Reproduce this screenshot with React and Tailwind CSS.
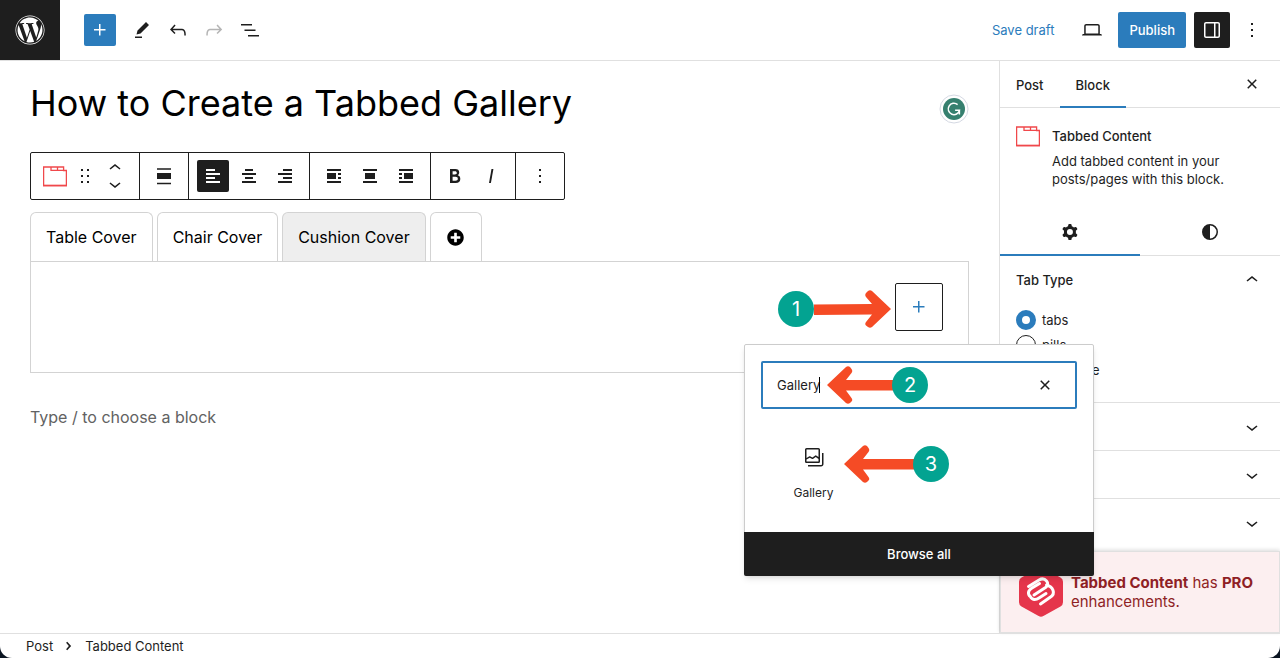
import React, { useState } from 'react';
import { FaWordpress, FaPlusCircle } from 'react-icons/fa';

const icons = {
  plus: 'M11 12.5V17.5H12.5V12.5H17.5V11H12.5V6H11V11H6V12.5H11Z',
  edit: 'm19 7-3-3-8.5 8.5-1 4 4-1L19 7Zm-7 11.5H5V20h7v-1.5Z',
  undo: 'M18.3 11.7c-.6-.6-1.4-.9-2.3-.9H6.7l2.9-3.3-1.1-1-4.5 5L8.5 16l1-1-2.7-2.7H16c.5 0 .9.2 1.3.5 1 1 1 3.4 1 4.5v.3h1.5v-.2c0-1.5 0-4.3-1.5-5.7z',
  redo: 'M15.6 6.5l-1.1 1 2.9 3.3H8c-.9 0-1.7.3-2.3.9-1.4 1.5-1.4 4.2-1.4 5.6v.2h1.5v-.3c0-1.1 0-3.5 1-4.5.3-.3.7-.5 1.3-.5h9.2L14.5 15l1.1 1.1 4.6-4.6-4.6-5z',
  listView: 'M3 6h11v1.5H3V6Zm3.5 5.5h11V13h-11v-1.5ZM21 17H10v1.5h11V17Z',
  desktop: 'M20.5 16h-.7V8c0-1.1-.9-2-2-2H6.2c-1.1 0-2 .9-2 2v8h-.7c-.8 0-1.5.7-1.5 1.5h20c0-.8-.7-1.5-1.5-1.5zM5.7 8c0-.3.2-.5.5-.5h11.6c.3 0 .5.2.5.5v7.6H5.7V8z',
  drawer: 'M18 4H6c-1.1 0-2 .9-2 2v12c0 1.1.9 2 2 2h12c1.1 0 2-.9 2-2V6c0-1.1-.9-2-2-2zm-4 14.5H6c-.3 0-.5-.2-.5-.5V6c0-.3.2-.5.5-.5h8v13zm4.5-.5c0 .3-.2.5-.5.5h-2.5v-13H18c.3 0 .5.2.5.5v12z',
  more: 'M13 19h-2v-2h2v2zm0-6h-2v-2h2v2zm0-6h-2V5h2v2z',
  close: 'M12 13.06l3.712 3.713 1.061-1.06L13.061 12l3.712-3.712-1.06-1.06L12 10.938 8.288 7.227l-1.061 1.06L10.939 12l-3.712 3.712 1.06 1.061L12 13.061z',
  drag: 'M8 7h2V5H8v2zm0 6h2v-2H8v2zm0 6h2v-2H8v2zm6-14v2h2V5h-2zm0 8h2v-2h-2v2zm0 6h2v-2h-2v2z',
  up: 'M6.5 12.4L12 8l5.5 4.4-.9 1.2L12 10l-4.5 3.6-1-1.2z',
  down: 'M17.5 11.6L12 16l-5.5-4.4.9-1.2L12 14l4.5-3.6 1 1.2z',
  right: 'M9.4 5.500L7.600 7.200l4.200 4.800-4.200 4.800 1.800 1.700 5.800-6.500z',
  bold: 'M14.7 11.3c1-.6 1.5-1.6 1.5-3 0-2.3-1.3-3.4-4-3.4H7v14h5.8c1.4 0 2.5-.3 3.3-1 .8-.7 1.2-1.7 1.2-2.9.1-1.9-.8-3.1-2.6-3.7zm-5.1-4h2.3c.6 0 1.1.1 1.4.4.3.3.5.7.5 1.2s-.2 1-.5 1.2c-.3.3-.8.4-1.4.4H9.6V7.3zm4.6 9c-.4.3-1 .4-1.7.4H9.6v-3.9h2.9c.7 0 1.3.2 1.7.5.4.3.6.8.6 1.5s-.2 1.2-.6 1.5z',
  italic: 'M12.5 5L10 19h1.9l2.5-14z',
  cog: 'M10.289 4.836A1 1 0 0111.275 4h1.306a1 1 0 01.987.836l.244 1.466c.787.26 1.503.679 2.108 1.218l1.393-.522a1 1 0 011.216.437l.653 1.13a1 1 0 01-.23 1.273l-1.148.944a6.025 6.025 0 010 2.435l1.149.946a1 1 0 01.23 1.272l-.653 1.13a1 1 0 01-1.216.437l-1.394-.522c-.605.54-1.32.958-2.108 1.218l-.244 1.466a1 1 0 01-.987.836h-1.306a1 1 0 01-.986-.836l-.244-1.466a5.995 5.995 0 01-2.108-1.218l-1.394.522a1 1 0 01-1.217-.436l-.653-1.131a1 1 0 01.23-1.272l1.149-.946a6.026 6.026 0 010-2.435l-1.148-.944a1 1 0 01-.23-1.272l.653-1.131a1 1 0 011.217-.437l1.393.522a5.994 5.994 0 012.108-1.218l.244-1.466zM14.929 12a3 3 0 11-6 0 3 3 0 016 0z',
  styles: 'M20 12a8 8 0 1 1-16 0 8 8 0 0 1 16 0Zm-1.5 0a6.5 6.5 0 0 1-6.5 6.5v-13a6.5 6.5 0 0 1 6.5 6.5Z',
  gallery: 'M16.375 4.5H4.625a.125.125 0 0 0-.125.125v8.254l2.859-1.54a.75.75 0 0 1 .68-.016l2.384 1.142 2.89-2.074a.75.75 0 0 1 .874 0l2.313 1.66V4.625a.125.125 0 0 0-.125-.125Zm.125 9.398-2.75-1.975-2.813 2.02a.75.75 0 0 1-.76.067l-2.444-1.17L4.5 14.583v1.792c0 .069.056.125.125.125h11.75a.125.125 0 0 0 .125-.125v-2.477ZM4.625 3C3.728 3 3 3.728 3 4.625v11.75C3 17.273 3.728 18 4.625 18h11.75c.898 0 1.625-.727 1.625-1.625V4.625C18 3.728 17.273 3 16.375 3H4.625ZM20 8v11c0 .69-.31 1-.999 1H6v1.5h13.001c1.52 0 2.499-.982 2.499-2.5V8H20Z',
};

// 20px grid icons
const smallIcons = {
  textLeft: 'M12 5V3H3v2h9zm5 4V7H3v2h14zm-5 4v-2H3v2h9zm5 4v-2H3v2h14z',
  textCenter: 'M14 5V3H6v2h8zm3 4V7H3v2h14zm-3 4v-2H6v2h8zm3 4v-2H3v2h14z',
  textRight: 'M17 5V3H8v2h9zm0 4V7H3v2h14zm0 4v-2H8v2h9zm0 4v-2H3v2h14z',
  blockLeft: 'M3 5h14V3H3v2zm9 8V7H3v6h9zm2-4h3V7h-3v2zm0 4h3v-2h-3v2zM3 17h14v-2H3v2z',
  blockCenter: 'M3 5h14V3H3v2zm12 8V7H5v6h10zM3 17h14v-2H3v2z',
  blockRight: 'M3 5h14V3H3v2zm0 4h3V7H3v2zm14 4V7H8v6h9zM3 13h3v-2H3v2zm0 4h14v-2H3v2z',
};

const Icon = ({ name, className = 'size-6' }) => (
  <svg viewBox="0 0 24 24" className={className} fill="currentColor" fillRule="evenodd" aria-hidden="true">
    <path d={icons[name]} />
  </svg>
);

const SmallIcon = ({ name }) => (
  <svg viewBox="0 0 20 20" className="size-5" fill="currentColor" aria-hidden="true">
    <path d={smallIcons[name]} />
  </svg>
);

const IconButton = ({ label, children, className = 'w-9' }) => (
  <button type="button" aria-label={label} className={`flex h-9 items-center justify-center ${className}`}>
    {children}
  </button>
);

const TabbedIcon = () => (
  <svg viewBox="0 0 24 21" className="h-[21px] w-6 shrink-0" fill="none" stroke="#f0484b" aria-hidden="true">
    <path d="M.6 19.5V1h20v3.5h2.8v15H.6Z" strokeWidth="1.3" />
    <path d="M8 1v3.4h13M14.5 1v3.4" strokeWidth="1.3" />
    <path d="M0 19.6h24" strokeWidth="1.4" />
  </svg>
);

const GrammarlyBadge = () => (
  <svg viewBox="0 0 30 30" className="mt-3 size-[30px] shrink-0" aria-hidden="true">
    <circle cx="15" cy="15" r="14" fill="#fff" stroke="#d5d9e3" />
    <circle cx="15" cy="15" r="11" fill="#36806f" />
    <path d="M18.6 10.6a5.7 5.7 0 1 0 1.9 5.6h-4.4M20.4 20.4v-4.2" fill="none" stroke="#fff" strokeWidth="1.5" />
  </svg>
);

const HexLogo = () => (
  <svg viewBox="0 0 44 50" className="h-[50px] w-11 shrink-0" aria-hidden="true">
    <path d="M19.6 1 2.5 10.6Q0 12 0 14.8V35.2Q0 38 2.5 39.4L19.6 49Q22 50.3 24.4 49L41.5 39.4Q44 38 44 35.2V14.8Q44 12 41.5 10.6L24.4 1Q22-.3 19.6 1Z" fill="#e5354b" />
    <path
      d="M9.5 19.5 20 13C26 9.5 32 16.5 26.500 20.5L15 28M10.5 29C8 25 10.5 22.5 13 21L20.5 16.5M11 29C13 33.5 17 33 20 31L27 26.5M27.5 18C34 19.5 37 26.5 31.5 30L21.5 37"
      fill="none"
      stroke="#fff"
      strokeWidth="3"
      strokeLinecap="round"
      strokeLinejoin="round"
    />
  </svg>
);

const ArrowRight = () => (
  <svg viewBox="1 0 77 38" className="h-[38px] w-[77px]" fill="#f54b25" aria-hidden="true">
    <path d="M78 19 59 1Q57-.5 55 1L53 3Q51.5 5 53 7L59 14 0 14.5V25L59 24.5 53 32Q51.5 34 53 35.5L55 37Q57 38.5 59 37Z" />
  </svg>
);

const ArrowLeft = () => (
  <svg viewBox="0 0 70 38" className="h-[38px] w-[70px]" fill="#f54b25" aria-hidden="true">
    <path d="M0 19 19 1Q21-.5 23 1L24.5 3Q26 5 24.5 7L19 14H70V24.5H19L24.5 32Q26 34 24.5 35.5L23 37Q21 38.5 19 37Z" />
  </svg>
);

const Step = ({ number, className = '' }) => (
  <span className={`flex size-9 items-center justify-center rounded-full bg-[#03a391] text-xl text-white ${className}`}>
    {number}
  </span>
);

const Header = () => (
  <header className="flex h-[61px] shrink-0 items-center border-b border-[#e0e0e0]">
    <a href="#posts" aria-label="View posts" className="flex size-15 items-center justify-center self-start bg-[#1e1e1e] text-white">
      <FaWordpress className="size-[30px]" />
    </a>
    <div className="ml-6 flex items-center">
      <button type="button" aria-label="Add block" className="mr-2 flex size-8 items-center justify-center rounded-xs bg-[#2b7cbc] text-white">
        <Icon name="plus" />
      </button>
      <IconButton label="Tools"><Icon name="edit" /></IconButton>
      <IconButton label="Undo"><Icon name="undo" /></IconButton>
      <IconButton label="Redo" className="w-9 text-[#b5b5b5]"><Icon name="redo" /></IconButton>
      <IconButton label="List view"><Icon name="listView" /></IconButton>
    </div>
    <div className="ml-auto flex items-center pr-2.5">
      <button type="button" className="mr-5 text-[#2b7cbc]">Save draft</button>
      <IconButton label="Preview"><Icon name="desktop" /></IconButton>
      <button type="button" className="ml-2 h-9 rounded-xs bg-[#2b7cbc] px-[11px] font-medium text-white">Publish</button>
      <IconButton label="Settings" className="mx-2 w-9 rounded-xs bg-[#1e1e1e] text-white"><Icon name="drawer" /></IconButton>
      <IconButton label="Options" className="-ml-1 w-9"><Icon name="more" /></IconButton>
    </div>
  </header>
);

const BlockToolbar = () => (
  <div role="toolbar" className="flex h-12 w-max divide-x divide-[#1e1e1e] rounded-xs border border-[#1e1e1e]">
    <div className="flex w-[109px] items-center pl-3">
      <button type="button" aria-label="Tabbed Content"><TabbedIcon /></button>
      <button type="button" aria-label="Drag" className="ml-1.5"><Icon name="drag" /></button>
      <div className="ml-1.5 flex flex-col">
        <button type="button" aria-label="Move up" className="flex h-4 items-center"><Icon name="up" className="size-6" /></button>
        <button type="button" aria-label="Move down" className="flex h-4 items-center"><Icon name="down" className="size-6" /></button>
      </div>
    </div>
    <div className="flex w-[49px] items-center justify-center">
      <IconButton label="Align">
        <svg viewBox="0 0 20 20" className="size-5" aria-hidden="true">
          <path d="M3 3h14M3 17.5h14" stroke="#1e1e1e" strokeWidth="1.5" />
          <path d="M3 7h14v6H3z" fill="#1e1e1e" />
        </svg>
      </IconButton>
    </div>
    <div className="flex w-[121px] items-center justify-center gap-1">
      <IconButton label="Align text left" className="w-8 max-h-8 rounded-xs bg-[#1e1e1e] text-white"><SmallIcon name="textLeft" /></IconButton>
      <IconButton label="Align text center" className="w-8"><SmallIcon name="textCenter" /></IconButton>
      <IconButton label="Align text right" className="w-8"><SmallIcon name="textRight" /></IconButton>
    </div>
    <div className="flex w-[121px] items-center justify-center gap-1">
      <IconButton label="Align left" className="w-8"><SmallIcon name="blockLeft" /></IconButton>
      <IconButton label="Align center" className="w-8"><SmallIcon name="blockCenter" /></IconButton>
      <IconButton label="Align right" className="w-8"><SmallIcon name="blockRight" /></IconButton>
    </div>
    <div className="flex w-[85px] items-center justify-center">
      <IconButton label="Bold"><Icon name="bold" /></IconButton>
      <IconButton label="Italic"><Icon name="italic" /></IconButton>
    </div>
    <div className="flex w-12 items-center justify-center">
      <IconButton label="Options"><Icon name="more" /></IconButton>
    </div>
  </div>
);

const InserterPopover = () => {
  const [query, setQuery] = useState('Gallery');

  return (
    <div className="absolute left-1/2 top-full z-20 mt-[13px] w-[350px] -translate-x-1/2 rounded-xs border border-[#ccc] bg-white shadow-md">
      <div className="relative mx-4 mt-4">
        <input
          type="text"
          aria-label="Search"
          value={query}
          onChange={(e) => setQuery(e.target.value)}
          className="h-12 w-full rounded-xs border-2 border-[#2b7cbc] px-3.5 outline-none"
        />
        <span className="absolute left-[58px] top-4 h-4 w-px bg-black" />
        <button type="button" aria-label="Reset search" className="absolute right-5 top-3">
          <Icon name="close" />
        </button>
        <div className="absolute left-[66px] top-[5px] flex items-center">
          <ArrowLeft />
          <Step number="2" className="-ml-[5px]" />
        </div>
      </div>
      <div className="relative px-4 pb-[31px] pt-6">
        <button type="button" className="flex w-[105px] flex-col items-center gap-4 pt-3 text-xs">
          <Icon name="gallery" />
          Gallery
        </button>
        <div className="absolute left-[99px] top-9 flex items-center">
          <ArrowLeft />
          <Step number="3" className="-ml-px" />
        </div>
      </div>
      <button type="button" className="-mx-px -mb-px block h-11 w-[350px] rounded-b-xs bg-[#1e1e1e] font-medium text-white">
        Browse all
      </button>
    </div>
  );
};

const tabs = ['Table Cover', 'Chair Cover', 'Cushion Cover'];

const Editor = () => (
  <main className="min-w-0 flex-1 px-[30px] pt-5">
    <div className="flex items-center justify-between">
      <h1 className="text-4xl leading-11 text-black">How to Create a Tabbed Gallery</h1>
      <GrammarlyBadge />
    </div>
    <div className="mt-[27px]">
      <BlockToolbar />
    </div>
    <div role="tablist" className="mt-3 flex gap-1 text-base text-black">
      {tabs.map((tab) => (
        <button
          key={tab}
          type="button"
          role="tab"
          aria-selected={tab === 'Cushion Cover'}
          className="h-[49px] rounded-t-md border border-b-0 border-[#d3d3d3] px-[15px] aria-selected:bg-[#eee]"
        >
          {tab}
        </button>
      ))}
      <button type="button" aria-label="Add tab" className="flex h-[49px] w-[52px] items-center justify-center rounded-t-md border border-b-0 border-[#d3d3d3]">
        <FaPlusCircle className="size-[17px]" />
      </button>
    </div>
    <div className="flex h-28 justify-end border border-[#d3d3d3] pr-[25px] pt-[21px]">
      <div className="relative size-12">
        <button type="button" aria-label="Add block" className="flex size-12 items-center justify-center rounded-xs border border-[#1e1e1e] text-[#2b7cbc]">
          <Icon name="plus" />
        </button>
        <div className="absolute right-[52px] top-[7px] flex items-center">
          <Step number="1" />
          <ArrowRight />
        </div>
        <InserterPopover />
      </div>
    </div>
    <p className="mt-8 text-base text-[#626262]">Type / to choose a block</p>
  </main>
);

const Sidebar = () => (
  <aside className="flex w-[281px] shrink-0 flex-col border-l border-[#e0e0e0]">
    <div className="flex h-[47px] shrink-0 items-stretch border-b border-[#e0e0e0] font-medium">
      <button type="button" className="px-4 pt-0.5">Post</button>
      <button type="button" className="-mb-px border-b-2 border-[#2b7cbc] px-4 pt-0.5">Block</button>
      <button type="button" aria-label="Close settings" className="ml-auto mr-4"><Icon name="close" /></button>
    </div>
    <div className="flex gap-3 px-4 pb-5 pt-4">
      <div className="pt-0.5"><TabbedIcon /></div>
      <div>
        <h2 className="font-medium leading-6">Tabbed Content</h2>
        <p className="mt-1 leading-[18px]">Add tabbed content in your posts/pages with this block.</p>
      </div>
    </div>
    <div className="flex h-12 shrink-0 border-b border-[#e0e0e0]">
      <button type="button" aria-label="Settings" className="-mb-px flex flex-1 items-center justify-center border-b-2 border-[#2b7cbc] pt-0.5"><Icon name="cog" /></button>
      <button type="button" aria-label="Styles" className="flex flex-1 items-center justify-center"><Icon name="styles" /></button>
    </div>
    <section className="border-b border-[#e0e0e0] pb-[22px]">
      <button type="button" className="flex h-12 w-full items-center justify-between px-4 font-medium">
        Tab Type
        <Icon name="up" />
      </button>
      <div className="flex flex-col gap-[5px] px-4 pt-1.5">
        {['tabs', 'pills', 'underline'].map((type) => (
          <label key={type} className="flex h-5 items-center gap-1.5">
            <input
              type="radio"
              name="tab-type"
              defaultChecked={type === 'tabs'}
              className="size-5 appearance-none rounded-full border border-[#1e1e1e] checked:border-6 checked:border-[#2b7cbc]"
            />
            {type}
          </label>
        ))}
      </div>
    </section>
    {['Titles', 'Content', 'Advanced'].map((panel) => (
      <button
        key={panel}
        type="button"
        aria-label={panel}
        className="flex h-12 shrink-0 items-center justify-end border-b border-[#e0e0e0] px-4 last-of-type:border-b-0"
      >
        <Icon name="down" />
      </button>
    ))}
    <div className="mt-auto flex items-center gap-2 border border-[#e0e0e0] bg-[#fceff0] py-[15px] pl-[18px] pr-4 text-[15px] leading-[19px] text-[#8f1f25] shadow-[0_-1px_4px_rgba(0,0,0,0.15)]">
      <HexLogo />
      <p><strong>Tabbed Content</strong> has <strong>PRO</strong> enhancements.</p>
    </div>
  </aside>
);

const App = () => (
  <div className="min-h-screen bg-[#0b1522] font-['Inter',sans-serif] text-[13px] leading-5 text-[#1e1e1e]">
    <div className="flex min-h-screen flex-col rounded-b-xl bg-white">
      <Header />
      <div className="flex flex-1">
        <Editor />
        <Sidebar />
      </div>
      <footer className="flex h-[25px] shrink-0 items-center border-t border-[#e0e0e0] px-[26px]">
        <a href="#post">Post</a>
        <Icon name="right" className="mx-2 size-4" />
        <span>Tabbed Content</span>
      </footer>
    </div>
  </div>
);

export default App;
